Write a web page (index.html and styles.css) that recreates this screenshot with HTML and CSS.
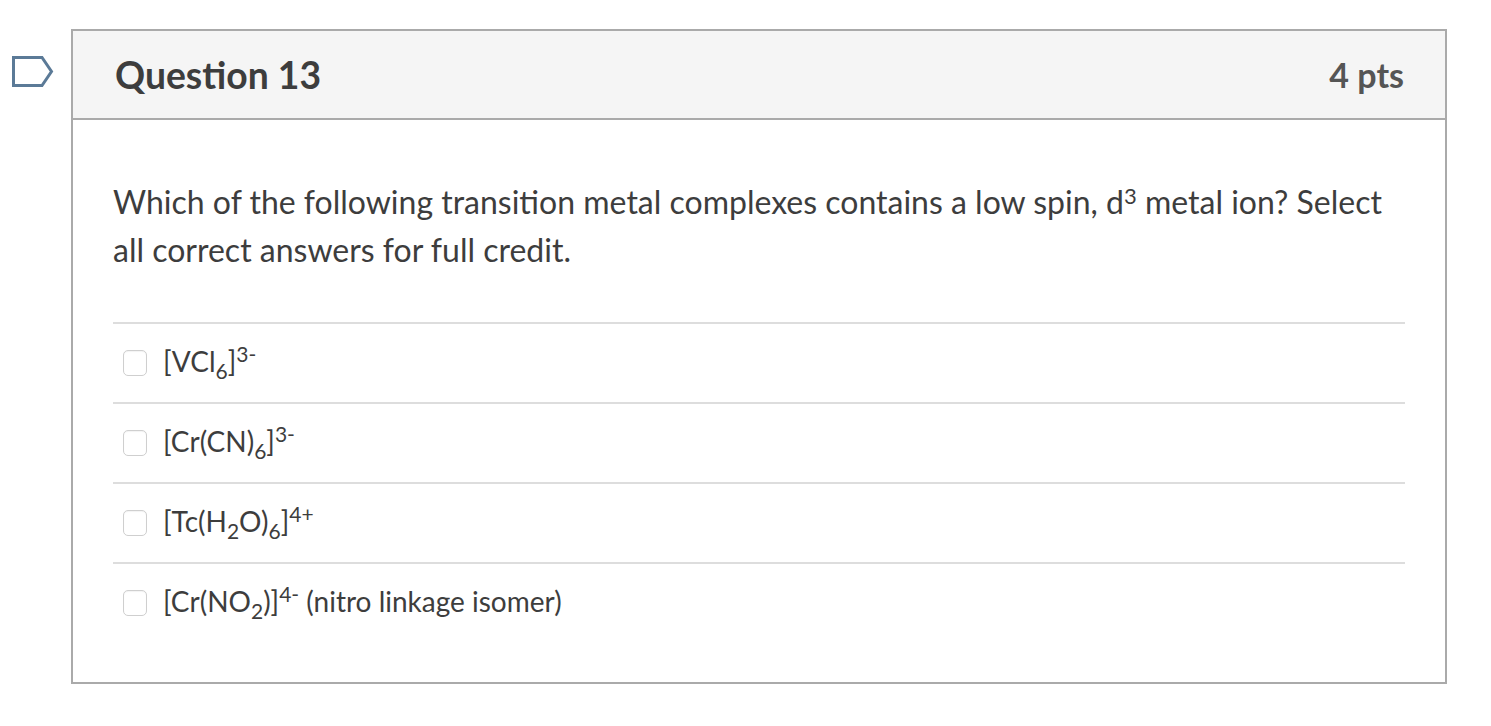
FILE: index.html
```html
<!DOCTYPE html>
<html>
<head>
<meta charset="utf-8">
<link rel="stylesheet" href="styles.css">
</head>
<body>
<div class="page">
  <div class="gutter">
    <svg class="flag" width="46" height="36" viewBox="0 0 46 36">
      <path d="M3.5 4.5 H32 L41.5 18.5 L32 32.5 H3.5 Z" fill="none" stroke="#5b7a97" stroke-width="3" stroke-linejoin="miter"/>
    </svg>
  </div>
  <div class="card">
    <div class="card-header">
      <span class="title">Question 13</span>
      <span class="pts">4 pts</span>
    </div>
    <div class="card-body">
      <p class="question">Which of the following transition metal complexes contains a low spin, d<sup>3</sup> metal ion? Select all correct answers for full credit.</p>
      <div class="answers">
        <label class="answer"><span class="box"></span><span class="atext">[VCl<sub>6</sub>]<sup>3-</sup></span></label>
        <label class="answer"><span class="box"></span><span class="atext">[Cr(CN)<sub>6</sub>]<sup>3-</sup></span></label>
        <label class="answer"><span class="box"></span><span class="atext">[Tc(H<sub>2</sub>O)<sub>6</sub>]<sup>4+</sup></span></label>
        <label class="answer"><span class="box"></span><span class="atext">[Cr(NO<sub>2</sub>)]<sup>4-</sup> (nitro linkage isomer)</span></label>
      </div>
    </div>
  </div>
</div>
</body>
</html>
```

FILE: styles.css
```css
html, body {
  margin: 0;
  padding: 0;
  background: #fff;
}
body {
  font-family: Lato, "Open Sans", sans-serif;
  color: #2d3b45;
}
.page {
  display: flex;
  padding-top: 29px;
}
.gutter {
  width: 71px;
  flex: 0 0 71px;
}
.flag {
  display: block;
  margin: 24px 0 0 10px;
}
.card {
  width: 1372px;
  border: 2px solid #aaaaaa;
}
.card-header {
  height: 87px;
  background: #f5f5f5;
  border-bottom: 2px solid #aaaaaa;
  display: flex;
  align-items: center;
  justify-content: space-between;
  padding: 0 41px 0 42px;
}
.title {
  font-size: 37.3px;
  font-weight: 700;
  color: #3d3d3d;
}
.pts {
  font-size: 34px;
  font-weight: 700;
  color: #555555;
}
.card-body {
  padding: 58px 40px 40px 40px;
}
.question {
  margin: 0;
  font-size: 32px;
  line-height: 48px;
  color: #3d3d3d;
}
.question sup {
  font-size: 22px;
  line-height: 0;
  vertical-align: 10px;
}
.answers {
  margin-top: 48px;
}
.answer {
  display: flex;
  align-items: center;
  height: 78px;
  border-top: 2px solid #dddddd;
  font-size: 28px;
  color: #3d3d3d;
}
.box {
  width: 22px;
  height: 24px;
  margin-left: 10px;
  margin-right: 16px;
  border: 1px solid #cfcfcf;
  border-radius: 5px;
  background: #fff;
  box-shadow: inset 0 1px 1px rgba(0,0,0,0.05);
}
.atext {
  margin-top: -4px;
}
.atext sub, .atext sup {
  font-size: 21px;
  line-height: 0;
}
.atext sup {
  vertical-align: 10px;
}
.atext sub {
  vertical-align: -7px;
}
```
